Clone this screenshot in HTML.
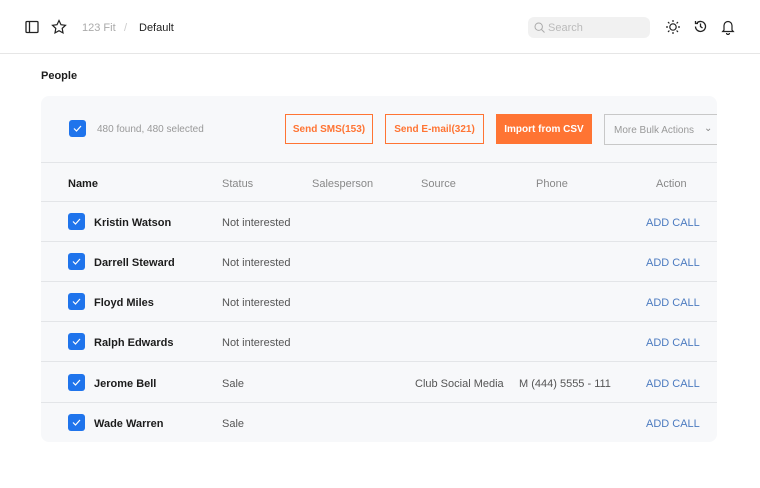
<!DOCTYPE html>
<html><head><style>
*{box-sizing:border-box;margin:0;padding:0}
body{width:760px;height:488px;background:#fff;font-family:"Liberation Sans",sans-serif;position:relative;overflow:hidden;color:#1c1c1c}
.a{position:absolute}
.hdr{left:0;top:0;width:760px;height:54px;border-bottom:1px solid #e6e6e6}
.card{left:41px;top:96px;width:676px;height:346px;background:#f7f8fa;border-radius:8px;overflow:hidden}
.cb{width:17px;height:17px;background:#1f74ec;border-radius:3px}
.cb svg{display:block}
.btn{height:30px;font-size:10px;font-weight:bold;display:flex;align-items:center;justify-content:center}
.line{left:0;width:676px;height:1px;background:#e3e5e8}
.t,.n,.ac,.h,.tx{line-height:15px}
.t{font-size:11px;color:#555}
.n{font-size:11px;font-weight:bold;color:#1c1c1c}
.ac{font-size:11px;color:#4c7bc0;left:605px}
.h{font-size:11px;color:#888}
</style></head><body>
<div class="a hdr"></div>
<svg class="a" style="left:25px;top:20px" width="14" height="14" viewBox="0 0 14 14" fill="none" stroke="#222" stroke-width="1.3"><rect x="1" y="1.5" width="12" height="11" rx="1"/><line x1="4.5" y1="1.5" x2="4.5" y2="12.5"/></svg>
<svg class="a" style="left:51px;top:19px" width="16" height="16" viewBox="0 0 16 16" fill="none" stroke="#222" stroke-width="1.2"><path d="M8 1.5l2 4.2 4.5.6-3.3 3.1.8 4.5L8 11.7l-4 2.2.8-4.5L1.5 6.3 6 5.7z"/></svg>
<div class="a tx" style="left:82px;top:21px;font-size:11px;color:#aaa">123 Fit</div>
<div class="a tx" style="left:124px;top:21px;font-size:11px;color:#ccc">/</div>
<div class="a tx" style="left:139px;top:21px;font-size:11px;color:#222">Default</div>
<div class="a" style="left:528px;top:17px;width:122px;height:21px;background:#f1f1f1;border-radius:6px"></div>
<svg class="a" style="left:534px;top:22px" width="11" height="11" viewBox="0 0 11 11" fill="none" stroke="#aaa" stroke-width="1"><circle cx="4.7" cy="4.7" r="3.7"/><line x1="7.5" y1="7.5" x2="10.5" y2="10.5"/></svg>
<div class="a tx" style="left:548px;top:21px;font-size:11px;color:#bbb">Search</div>
<svg class="a" style="left:665px;top:19px" width="16" height="16" viewBox="0 0 16 16" fill="none" stroke="#222" stroke-width="1.2"><circle cx="8" cy="8" r="3.2"/><path d="M8 1v2M8 13v2M1 8h2M13 8h2M3 3l1.4 1.4M11.6 11.6L13 13M3 13l1.4-1.4M11.6 4.4L13 3"/></svg>
<svg class="a" style="left:693px;top:19px" width="15" height="15" viewBox="0 0 15 15" fill="none" stroke="#222" stroke-width="1.3"><path d="M2.5 7.5a5 5 0 1 0 1.5-3.6"/><path d="M2.5 2v2.5H5"/><path d="M7.5 4.5v3l2 1.5"/></svg>
<svg class="a" style="left:721px;top:19px" width="14" height="16" viewBox="0 0 14 16" fill="none" stroke="#222" stroke-width="1.2"><path d="M3 11V6.5a4 4 0 0 1 8 0V11l1.3 1.5H1.7z"/><path d="M5.5 14a1.5 1.5 0 0 0 3 0"/></svg>
<div class="a tx" style="left:41px;top:69px;font-size:11px;font-weight:bold;color:#1c1c1c">People</div>
<div class="a card">
 <div class="a cb" style="left:28px;top:24px"><svg width="17" height="17" viewBox="0 0 17 17"><path d="M5 8.5l2.5 2.5 4.5-5" stroke="#fff" stroke-width="1.2" fill="none"/></svg></div>
 <div class="a tx" style="left:56px;top:26px;font-size:10px;color:#999">480 found, 480 selected</div>
 <div class="a btn" style="left:244px;top:18px;width:88px;border:1px solid #ff7433;color:#ff7433">Send SMS(153)</div>
 <div class="a btn" style="left:344px;top:18px;width:99px;border:1px solid #ff7433;color:#ff7433">Send E-mail(321)</div>
 <div class="a btn" style="left:455px;top:18px;width:96px;background:#ff7433;color:#fff">Import from CSV</div>
 <div class="a" style="left:563px;top:18px;width:120px;height:31px;border:1px solid #c8c8c8;font-size:10px;color:#999;padding:10px 0 0 9px">More Bulk Actions <span style="position:absolute;left:99px;top:8px;color:#888">⌄</span></div>
 <div class="a line" style="top:66px"></div>
 <div class="a n" style="left:27px;top:81px">Name</div>
 <div class="a h" style="left:181px;top:81px">Status</div>
 <div class="a h" style="left:271px;top:81px">Salesperson</div>
 <div class="a h" style="left:380px;top:81px">Source</div>
 <div class="a h" style="left:495px;top:81px">Phone</div>
 <div class="a h" style="left:615px;top:81px">Action</div>
 <div class="a line" style="top:105px"></div>
 <div class="a line" style="top:145px"></div>
 <div class="a line" style="top:185px"></div>
 <div class="a line" style="top:225px"></div>
 <div class="a line" style="top:265px"></div>
 <div class="a line" style="top:306px"></div>
</div>
<div class="a" style="left:41px;top:202px">
 <div class="a cb" style="left:27px;top:11px"><svg width="17" height="17" viewBox="0 0 17 17"><path d="M5 8.5l2.5 2.5 4.5-5" stroke="#fff" stroke-width="1.2" fill="none"/></svg></div>
 <div class="a n" style="left:53px;top:14px;white-space:nowrap">Kristin Watson</div>
 <div class="a t" style="left:181px;top:14px;white-space:nowrap">Not interested</div>
 <div class="a ac" style="top:14px;white-space:nowrap">ADD CALL</div>
</div>
<div class="a" style="left:41px;top:242px">
 <div class="a cb" style="left:27px;top:11px"><svg width="17" height="17" viewBox="0 0 17 17"><path d="M5 8.5l2.5 2.5 4.5-5" stroke="#fff" stroke-width="1.2" fill="none"/></svg></div>
 <div class="a n" style="left:53px;top:14px;white-space:nowrap">Darrell Steward</div>
 <div class="a t" style="left:181px;top:14px;white-space:nowrap">Not interested</div>
 <div class="a ac" style="top:14px;white-space:nowrap">ADD CALL</div>
</div>
<div class="a" style="left:41px;top:282px">
 <div class="a cb" style="left:27px;top:11px"><svg width="17" height="17" viewBox="0 0 17 17"><path d="M5 8.5l2.5 2.5 4.5-5" stroke="#fff" stroke-width="1.2" fill="none"/></svg></div>
 <div class="a n" style="left:53px;top:14px;white-space:nowrap">Floyd Miles</div>
 <div class="a t" style="left:181px;top:14px;white-space:nowrap">Not interested</div>
 <div class="a ac" style="top:14px;white-space:nowrap">ADD CALL</div>
</div>
<div class="a" style="left:41px;top:322px">
 <div class="a cb" style="left:27px;top:11px"><svg width="17" height="17" viewBox="0 0 17 17"><path d="M5 8.5l2.5 2.5 4.5-5" stroke="#fff" stroke-width="1.2" fill="none"/></svg></div>
 <div class="a n" style="left:53px;top:14px;white-space:nowrap">Ralph Edwards</div>
 <div class="a t" style="left:181px;top:14px;white-space:nowrap">Not interested</div>
 <div class="a ac" style="top:14px;white-space:nowrap">ADD CALL</div>
</div>
<div class="a" style="left:41px;top:362px">
 <div class="a cb" style="left:27px;top:12px"><svg width="17" height="17" viewBox="0 0 17 17"><path d="M5 8.5l2.5 2.5 4.5-5" stroke="#fff" stroke-width="1.2" fill="none"/></svg></div>
 <div class="a n" style="left:53px;top:15px;white-space:nowrap">Jerome Bell</div>
 <div class="a t" style="left:181px;top:15px;white-space:nowrap">Sale</div>
 <div class="a t" style="left:374px;top:15px;white-space:nowrap">Club Social Media</div>
 <div class="a t" style="left:478px;top:15px;white-space:nowrap">M (444) 5555 - 111</div>
 <div class="a ac" style="top:15px;white-space:nowrap">ADD CALL</div>
</div>
<div class="a" style="left:41px;top:402px">
 <div class="a cb" style="left:27px;top:12px"><svg width="17" height="17" viewBox="0 0 17 17"><path d="M5 8.5l2.5 2.5 4.5-5" stroke="#fff" stroke-width="1.2" fill="none"/></svg></div>
 <div class="a n" style="left:53px;top:15px;white-space:nowrap">Wade Warren</div>
 <div class="a t" style="left:181px;top:15px;white-space:nowrap">Sale</div>
 <div class="a ac" style="top:15px;white-space:nowrap">ADD CALL</div>
</div>
</body></html>
